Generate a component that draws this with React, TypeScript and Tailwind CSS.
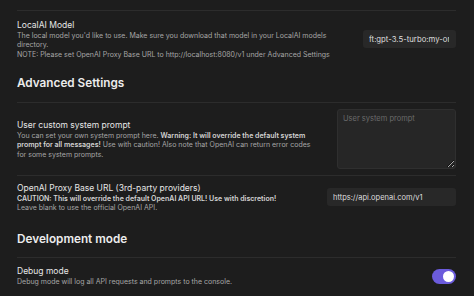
import { useState } from "react";

type RowProps = {
    title: string;
    children: React.ReactNode;
    control: React.ReactNode;
    height: string;
};

function Row({ title, children, control, height }: RowProps) {
    return (
        <div className={`flex items-center justify-between gap-4 ${height}`}>
            <div className="flex flex-col">
                <h4 className="text-[8.5px] leading-[12px] text-[#e6e6e6]">{title}</h4>
                <div className="text-[7px] leading-[9.5px] text-[#a6a6a6] whitespace-nowrap">{children}</div>
            </div>
            {control}
        </div>
    );
}

export default function App() {
    const [debug, setDebug] = useState(true);

    return (
        <div
            className="min-h-screen w-[474px] h-[296px] overflow-hidden bg-[#1d1d1d] pt-[10px] pl-[17px] pr-[18px]"
            style={{ fontFamily: "Inter, 'Noto Sans', sans-serif" }}
        >
            <div className="border-t border-[#2c2c2c]">
                <Row
                    title="LocalAI Model"
                    height="h-[56px]"
                    control={
                        <input
                            defaultValue="ft:gpt-3.5-turbo:my-org"
                            className="w-[93px] h-[18px] shrink-0 rounded-[3px] bg-[#282828] pl-[6px] pr-[7px] text-[7.75px] text-[#dedede] outline-none"
                        />
                    }
                >
                    <p>The local model you'd like to use. Make sure you download that model in your LocalAI models</p>
                    <p>directory.</p>
                    <p>NOTE: Please set OpenAI Proxy Base URL to http://localhost:8080/v1 under Advanced Settings</p>
                </Row>
            </div>

            <h3 className="pt-[8px] pb-[11px] text-[11.75px] leading-[16px] font-semibold text-[#ececec]">Advanced Settings</h3>

            <div className="border-t border-[#2c2c2c]">
                <Row
                    title="User custom system prompt"
                    height="h-[72px]"
                    control={
                        <textarea
                            placeholder="User system prompt"
                            className="w-[119px] h-[60px] shrink-0 rounded-[3px] border border-[#2f2f2f] bg-[#262626] px-[5px] py-[3px] text-[7.5px] text-[#dedede] placeholder:text-[#6b6b6b] outline-none"
                        />
                    }
                >
                    <p>
                        You can set your own system prompt here. <b className="font-semibold text-[#d4d4d4]">Warning: It will override the default system</b>
                    </p>
                    <p>
                        <b className="font-semibold text-[#d4d4d4]">prompt for all messages!</b> Use with caution! Also note that OpenAI can return error codes
                    </p>
                    <p>for some system prompts.</p>
                </Row>
            </div>

            <div className="border-t border-[#2c2c2c]">
                <Row
                    title="OpenAI Proxy Base URL (3rd-party providers)"
                    height="h-[42px]"
                    control={
                        <input
                            defaultValue="https://api.openai.com/v1"
                            className="w-[129px] h-[18px] shrink-0 rounded-[3px] bg-[#282828] px-[6px] text-[7.5px] text-[#dedede] outline-none"
                        />
                    }
                >
                    <p>
                        <b className="font-semibold text-[#d4d4d4]">CAUTION: This will override the default OpenAI API URL! Use with discretion!</b>
                    </p>
                    <p>Leave blank to use the official OpenAI API.</p>
                </Row>
            </div>

            <h3 className="pt-[13px] pb-[10px] text-[11.75px] leading-[16px] font-semibold text-[#ececec]">Development mode</h3>

            <div className="border-t border-[#2c2c2c]">
                <Row
                    title="Debug mode"
                    height="h-[36px]"
                    control={
                        <button
                            onClick={() => setDebug(!debug)}
                            className={`relative w-[24px] h-[15px] shrink-0 rounded-full ${debug ? "bg-[#6b5bdc]" : "bg-[#3a3a3a]"}`}
                        >
                            <span
                                className={`absolute top-[2px] w-[11px] h-[11px] rounded-full bg-white ${debug ? "right-[2px]" : "left-[2px]"}`}
                            />
                        </button>
                    }
                >
                    <p>Debug mode will log all API requests and prompts to the console.</p>
                </Row>
            </div>
        </div>
    );
}
